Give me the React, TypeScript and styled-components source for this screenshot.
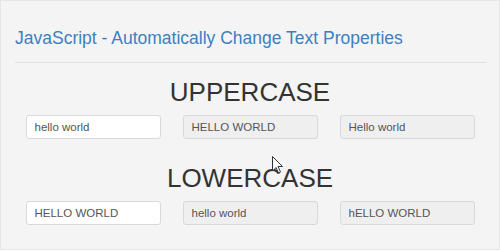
import React from "react";
import styled, { createGlobalStyle } from "styled-components";

const GlobalStyle = createGlobalStyle`
	html, body {
		margin: 0;
		padding: 0;
		background: #ffffff;
	}
	body {
		font-family: "Liberation Sans", Arial, sans-serif;
	}
`;

const Panel = styled.div`
	position: relative;
	box-sizing: border-box;
	width: 500px;
	height: 250px;
	background: #f4f4f4;
	border: 1px solid #e6e6e6;
	padding: 0 14px;
`;

const Title = styled.h3`
	margin: 0;
	padding-top: 24px;
	font-size: 17.5px;
	font-weight: 400;
	line-height: 26px;
	color: #3d80c1;
`;

const Divider = styled.hr`
	margin: 11px 0 0;
	border: 0;
	border-top: 1px solid #e2e2e2;
	width: 471px;
`;

const Section = styled.section<{ $top: number }>`
	display: flex;
	flex-direction: column;
	align-items: center;
	margin-top: ${(p) => p.$top}px;
`;

const Heading = styled.h2`
	margin: 0;
	font-size: 26px;
	font-weight: 400;
	line-height: 30px;
	color: #333333;
`;

const Row = styled.div`
	display: flex;
	gap: 22px;
	margin-top: 8px;
`;

const Field = styled.input<{ $readonly?: boolean }>`
	box-sizing: border-box;
	width: 135px;
	height: 24px;
	padding: 0 8px;
	border: 1px solid #d9d9d9;
	border-radius: 3px;
	background: ${(p) => (p.$readonly ? "#efefef" : "#ffffff")};
	font-family: "Liberation Sans", Arial, sans-serif;
	font-size: 11.5px;
	color: #555555;
	outline: none;
`;

const Cursor = styled.svg`
	position: absolute;
	left: 271px;
	top: 155px;
`;

export default function App() {
	return (
		<>
			<GlobalStyle />
			<Panel>
				<Title>JavaScript - Automatically Change Text Properties</Title>
				<Divider />
				<Section $top={14}>
					<Heading>UPPERCASE</Heading>
					<Row>
						<Field defaultValue="hello world" />
						<Field $readonly readOnly value="HELLO WORLD" />
						<Field $readonly readOnly value="Hello world" />
					</Row>
				</Section>
				<Section $top={24}>
					<Heading>LOWERCASE</Heading>
					<Row>
						<Field defaultValue="HELLO WORLD" />
						<Field $readonly readOnly value="hello world" />
						<Field $readonly readOnly value="hELLO WORLD" />
					</Row>
				</Section>
				<Cursor width="12" height="20" viewBox="0 0 12 20">
					<path d="M0.5 0.5 L0.5 15 L4 11.5 L6.5 17 L8.5 16 L6 10.5 L10.5 10.5 Z" fill="#ffffff" stroke="#333" strokeWidth="1" />
				</Cursor>
			</Panel>
		</>
	);
}
